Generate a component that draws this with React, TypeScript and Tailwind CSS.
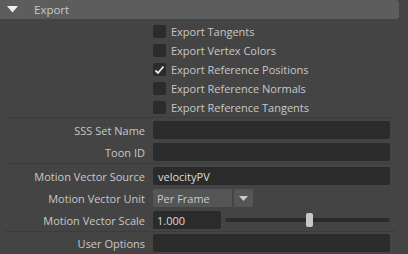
import React from "react";

const font = { fontFamily: '"Open Sans", "DejaVu Sans", sans-serif' };

function Check({ label, checked }: { label: string; checked?: boolean }) {
  return (
    <div className="flex h-[19px] items-center pl-[153px]">
      <div className="flex h-[13px] w-[13px] items-center justify-center rounded-[2px] bg-[#2b2b2b]">
        {checked && (
          <svg width="11" height="10" viewBox="0 0 11 10">
            <path d="M1.5 5.5 L4 8 L9.5 1.5" stroke="#ececec" strokeWidth="1.8" fill="none" />
          </svg>
        )}
      </div>
      <span className="ml-[5px] text-[11px] leading-none text-[#c8c8c8]">{label}</span>
    </div>
  );
}

function Row({ label, children }: { label: string; children: React.ReactNode }) {
  return (
    <div className="flex h-[18px] items-center">
      <div className="w-[145px] text-right text-[11px] leading-none text-[#c8c8c8]">{label}</div>
      <div className="ml-[8px] flex h-full w-[237px] items-center">{children}</div>
    </div>
  );
}

function Field({ value }: { value?: string }) {
  return (
    <div className="flex h-full w-full items-center rounded-[2px] bg-[#2b2b2b] pl-[5px] text-[11px] leading-none text-[#dcdcdc]">
      {value}
    </div>
  );
}

function Sep() {
  return <div className="ml-[4px] h-px w-[392px] bg-[#3c3c3c]" />;
}

export default function App() {
  return (
    <div className="h-[254px] w-[408px] overflow-hidden bg-[#444444]" style={font}>
      <div className="flex h-[19px] w-[399px] items-center rounded-r-[3px] bg-[#5d5d5d]">
        <svg className="ml-[7px]" width="11" height="7" viewBox="0 0 11 7">
          <path d="M0 0 H11 L5.5 6.5 Z" fill="#f0f0f0" />
        </svg>
        <span className="ml-[16px] text-[11.5px] leading-none text-[#c8c8c8]">Export</span>
      </div>
      <div className="mt-[3px] flex flex-col">
        <Check label="Export Tangents" />
        <Check label="Export Vertex Colors" />
        <Check label="Export Reference Positions" checked />
        <Check label="Export Reference Normals" />
        <Check label="Export Reference Tangents" />
      </div>
      <Sep />
      <div className="mt-[3px] flex flex-col gap-[4px]">
        <Row label="SSS Set Name">
          <Field />
        </Row>
        <Row label="Toon ID">
          <Field />
        </Row>
      </div>
      <div className="mt-[2px]">
        <Sep />
      </div>
      <div className="mt-[3px] flex flex-col gap-[4px]">
        <Row label="Motion Vector Source">
          <Field value="velocityPV" />
        </Row>
        <Row label="Motion Vector Unit">
          <div className="flex h-full w-[79px] items-center rounded-[2px] bg-[#555555] pl-[4px] text-[11px] leading-none text-[#c8c8c8]">
            Per Frame
          </div>
          <div className="ml-[2px] flex h-full w-[19px] items-center justify-center rounded-[2px] bg-[#555555]">
            <svg width="9" height="5" viewBox="0 0 9 5">
              <path d="M0 0 H9 L4.5 5 Z" fill="#c8c8c8" />
            </svg>
          </div>
        </Row>
        <Row label="Motion Vector Scale">
          <div className="flex h-full w-[68px] items-center rounded-[2px] bg-[#2b2b2b] pl-[4px] text-[11px] leading-none text-[#dcdcdc]">
            1.000
          </div>
          <div className="relative ml-[4px] flex h-full flex-1 items-center">
            <div className="h-[4px] w-full rounded-full bg-[#2b2b2b]" />
            <div className="absolute left-[81px] top-[2px] h-[14px] w-[7px] rounded-[2px] bg-[#c8c8c8]" />
          </div>
        </Row>
      </div>
      <div className="mt-[2px]">
        <Sep />
      </div>
      <div className="mt-[2px] flex flex-col">
        <Row label="User Options">
          <Field />
        </Row>
      </div>
    </div>
  );
}
